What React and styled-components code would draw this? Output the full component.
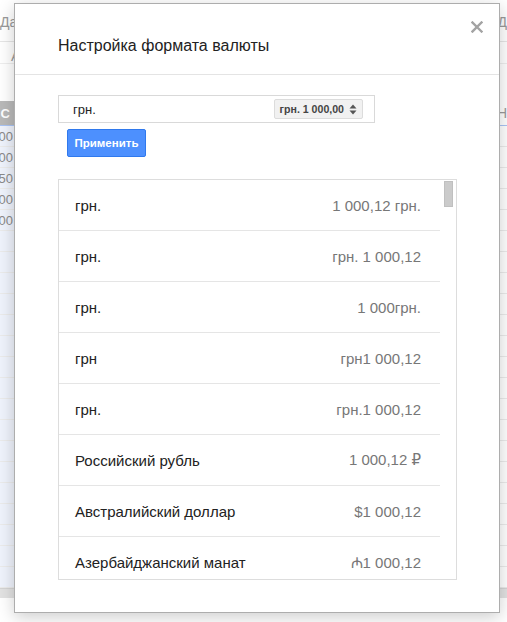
import React from 'react'
import styled, { createGlobalStyle } from 'styled-components'

const GlobalStyle = createGlobalStyle`
  html, body {
    margin: 0;
    padding: 0;
    background: #ffffff;
  }
  body {
    font-family: "Liberation Sans", Arial, "DejaVu Sans", sans-serif;
  }
`

const formats = [
  { name: 'грн.', sample: '1 000,12 грн.' },
  { name: 'грн.', sample: 'грн. 1 000,12' },
  { name: 'грн.', sample: '1 000грн.' },
  { name: 'грн', sample: 'грн1 000,12' },
  { name: 'грн.', sample: 'грн.1 000,12' },
  { name: 'Российский рубль', sample: '1 000,12 ₽' },
  { name: 'Австралийский доллар', sample: '$1 000,12' },
  { name: 'Азербайджанский манат', sample: '₼1 000,12' },
]

const cellValues = ['00', '00', '50', '00', '00', '', '', '', '', '', '', '', '', '', '', '', '', '', '', '', '', '']

export default function App() {
  return (
    <>
      <GlobalStyle />
      <Page>
        <Sheet>
          <TopRow>
            <SheetLabel>Да</SheetLabel>
            <SheetLabel>Д</SheetLabel>
          </TopRow>
          <SubRow>
            <SheetLabel $indent>А</SheetLabel>
          </SubRow>
          <Gap />
          <HeaderRow>
            <HeaderCell>С</HeaderCell>
            <SheetLabel>Н</SheetLabel>
          </HeaderRow>
          {cellValues.map((v, i) => (
            <DataRow key={i}>
              <DataCell>{v}</DataCell>
            </DataRow>
          ))}
          <SheetScroll />
        </Sheet>

        <Dialog>
          <CloseButton aria-label="Закрыть">
            <svg width="12" height="12" viewBox="0 0 12 12">
              <path d="M1.5 1.5 L10.5 10.5 M10.5 1.5 L1.5 10.5" stroke="#a3a3a3" strokeWidth="2.4" strokeLinecap="square" />
            </svg>
          </CloseButton>
          <Header>
            <Title>Настройка формата валюты</Title>
          </Header>
          <Body>
            <FormatInput>
              <InputText>грн.</InputText>
              <Picker>
                грн. 1 000,00
                <svg width="8" height="11" viewBox="0 0 8 11">
                  <path d="M4 0.5 L7.5 4.5 L0.5 4.5 Z M4 10.5 L7.5 6.5 L0.5 6.5 Z" fill="#555" />
                </svg>
              </Picker>
            </FormatInput>
            <ApplyButton>Применить</ApplyButton>
            <List>
              <Rows>
                {formats.map((f, i) => (
                  <Row key={i}>
                    <RowName>{f.name}</RowName>
                    <RowSample>{f.sample}</RowSample>
                  </Row>
                ))}
              </Rows>
              <ScrollTrack>
                <ScrollThumb />
              </ScrollTrack>
            </List>
          </Body>
        </Dialog>
      </Page>
    </>
  )
}

const Page = styled.div`
  position: relative;
  width: 507px;
  height: 622px;
  overflow: hidden;
  background: #ffffff;
`

const Sheet = styled.div`
  display: flex;
  flex-direction: column;
  width: 100%;
`

const SheetLabel = styled.span`
  font-size: 14px;
  color: #9a9a9a;
  padding-left: ${p => (p.$indent ? '11px' : '0')};
`

const TopRow = styled.div`
  height: 42px;
  display: flex;
  align-items: center;
  justify-content: space-between;
  padding-top: 2px;
  box-sizing: border-box;
  border-bottom: 1px solid #e6e6e6;
`

const SubRow = styled.div`
  height: 22px;
  display: flex;
  align-items: center;
  padding-top: 6px;
  box-sizing: border-box;
  border-bottom: 1px solid #eeeeee;
`

const Gap = styled.div`
  height: 37px;
`

const HeaderRow = styled.div`
  height: 24px;
  display: flex;
  align-items: center;
  justify-content: space-between;
  border-bottom: 1px solid #a9c4f5;
`

const HeaderCell = styled.div`
  width: 15px;
  height: 100%;
  background: #b9b9b9;
  color: #ffffff;
  font-size: 13px;
  font-weight: bold;
  display: flex;
  align-items: center;
  justify-content: flex-end;
  padding-right: 5px;
  box-sizing: border-box;
`

const DataRow = styled.div`
  height: 21px;
  display: flex;
  border-bottom: 1px solid #ebebeb;
  box-sizing: border-box;
`

const DataCell = styled.div`
  width: 15px;
  background: #eff3fc;
  font-size: 13px;
  color: #8a8a8a;
  display: flex;
  align-items: center;
  justify-content: flex-end;
  padding-right: 2px;
  box-sizing: border-box;
`

const SheetScroll = styled.div`
  height: 9px;
  background: #e2e2e2;
  border-top: 1px solid #d4d4d4;
`

const Dialog = styled.div`
  position: absolute;
  left: 14px;
  top: 3px;
  width: 486px;
  height: 610px;
  box-sizing: border-box;
  background: #ffffff;
  border: 1px solid #adadad;
  box-shadow: 0 4px 16px rgba(0, 0, 0, 0.2);
  display: flex;
  flex-direction: column;
`

const CloseButton = styled.button`
  position: absolute;
  top: 13px;
  right: 12px;
  width: 20px;
  height: 20px;
  padding: 0;
  border: none;
  background: transparent;
  display: flex;
  align-items: center;
  justify-content: center;
  cursor: pointer;
`

const Header = styled.div`
  height: 71px;
  padding: 0 43px;
  display: flex;
  align-items: center;
  border-bottom: 1px solid #e4e4e4;
  box-sizing: border-box;
`

const Title = styled.h1`
  margin: 0;
  padding-top: 13px;
  font-size: 16px;
  font-weight: normal;
  color: #222222;
`

const Body = styled.div`
  padding: 20px 0 0 43px;
  display: flex;
  flex-direction: column;
  align-items: flex-start;
`

const FormatInput = styled.div`
  width: 317px;
  height: 28px;
  box-sizing: border-box;
  border: 1px solid #d9d9d9;
  display: flex;
  align-items: center;
  justify-content: space-between;
  padding: 0 11px 0 14px;
`

const InputText = styled.span`
  font-size: 13px;
  color: #222222;
`

const Picker = styled.div`
  height: 20px;
  box-sizing: border-box;
  padding: 0 5px 0 5px;
  background: #f1f1f1;
  border: 1px solid #dcdcdc;
  border-radius: 2px;
  display: flex;
  align-items: center;
  gap: 5px;
  font-size: 10.6px;
  font-weight: bold;
  color: #444444;
`

const ApplyButton = styled.button`
  margin: 6px 0 0 9px;
  width: 79px;
  height: 28px;
  padding: 0;
  box-sizing: border-box;
  background: #4d90fe;
  border: 1px solid #3079ed;
  border-radius: 2px;
  color: #ffffff;
  font-family: inherit;
  font-size: 11.5px;
  font-weight: bold;
  cursor: pointer;
`

const List = styled.div`
  margin-top: 22px;
  width: 399px;
  height: 401px;
  box-sizing: border-box;
  border: 1px solid #dddddd;
  display: flex;
  overflow: hidden;
`

const Rows = styled.div`
  flex: 1;
  display: flex;
  flex-direction: column;
`

const Row = styled.div`
  flex: 0 0 51px;
  box-sizing: border-box;
  border-bottom: 1px solid #e5e5e5;
  display: flex;
  align-items: center;
  justify-content: space-between;
  padding: 0 19px 0 16px;
  font-size: 15px;
`

const RowName = styled.span`
  color: #222222;
`

const RowSample = styled.span`
  color: #777777;
`

const ScrollTrack = styled.div`
  width: 16px;
  padding: 1px 0 0 4px;
  box-sizing: border-box;
`

const ScrollThumb = styled.div`
  width: 9px;
  height: 26px;
  background: #cbcbcb;
  border: 1px solid #c0c0c0;
  box-sizing: border-box;
`
